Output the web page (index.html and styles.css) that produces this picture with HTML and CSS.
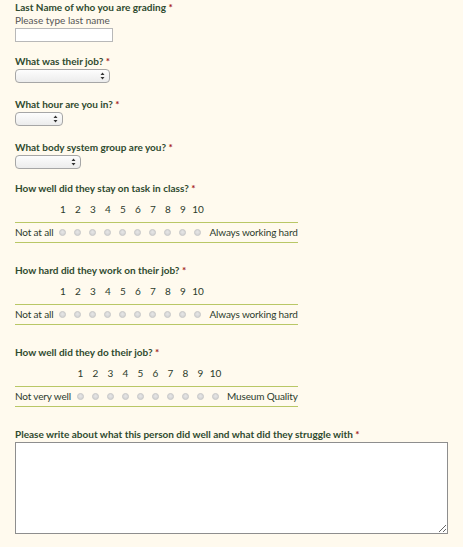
FILE: index.html
```html
<!DOCTYPE html>
<html>
<head>
<meta charset="utf-8">
<link rel="stylesheet" href="styles.css">
</head>
<body>
<form class="form">
  <div class="field f-text">
    <div class="label">Last Name of who you are grading <span class="req">*</span></div>
    <div class="hint">Please type last name</div>
    <input class="text-input" type="text">
  </div>

  <div class="field f-select">
    <div class="label">What was their job? <span class="req">*</span></div>
    <div class="select w95"><svg class="arrows" width="5" height="8" viewBox="0 0 5 8"><path d="M2.5 0.5 L4.5 3 L0.5 3 Z M2.5 7.5 L4.5 5 L0.5 5 Z" fill="#333"/></svg></div>
  </div>

  <div class="field f-select">
    <div class="label">What hour are you in? <span class="req">*</span></div>
    <div class="select w48"><svg class="arrows" width="5" height="8" viewBox="0 0 5 8"><path d="M2.5 0.5 L4.5 3 L0.5 3 Z M2.5 7.5 L4.5 5 L0.5 5 Z" fill="#333"/></svg></div>
  </div>

  <div class="field f-select last">
    <div class="label">What body system group are you? <span class="req">*</span></div>
    <div class="select w66"><svg class="arrows" width="5" height="8" viewBox="0 0 5 8"><path d="M2.5 0.5 L4.5 3 L0.5 3 Z M2.5 7.5 L4.5 5 L0.5 5 Z" fill="#333"/></svg></div>
  </div>

  <div class="field f-matrix">
    <div class="label">How well did they stay on task in class? <span class="req">*</span></div>
    <table class="scale">
      <tr class="nums"><td></td><td>1</td><td>2</td><td>3</td><td>4</td><td>5</td><td>6</td><td>7</td><td>8</td><td>9</td><td>10</td><td></td></tr>
      <tr class="opts"><td class="lo">Not at all</td><td><span class="radio"></span></td><td><span class="radio"></span></td><td><span class="radio"></span></td><td><span class="radio"></span></td><td><span class="radio"></span></td><td><span class="radio"></span></td><td><span class="radio"></span></td><td><span class="radio"></span></td><td><span class="radio"></span></td><td><span class="radio"></span></td><td class="hi">Always working hard</td></tr>
    </table>
  </div>

  <div class="field f-matrix">
    <div class="label">How hard did they work on their job? <span class="req">*</span></div>
    <table class="scale">
      <tr class="nums"><td></td><td>1</td><td>2</td><td>3</td><td>4</td><td>5</td><td>6</td><td>7</td><td>8</td><td>9</td><td>10</td><td></td></tr>
      <tr class="opts"><td class="lo">Not at all</td><td><span class="radio"></span></td><td><span class="radio"></span></td><td><span class="radio"></span></td><td><span class="radio"></span></td><td><span class="radio"></span></td><td><span class="radio"></span></td><td><span class="radio"></span></td><td><span class="radio"></span></td><td><span class="radio"></span></td><td><span class="radio"></span></td><td class="hi">Always working hard</td></tr>
    </table>
  </div>

  <div class="field f-matrix">
    <div class="label">How well did they do their job? <span class="req">*</span></div>
    <table class="scale">
      <tr class="nums"><td></td><td>1</td><td>2</td><td>3</td><td>4</td><td>5</td><td>6</td><td>7</td><td>8</td><td>9</td><td>10</td><td></td></tr>
      <tr class="opts"><td class="lo">Not very well</td><td><span class="radio"></span></td><td><span class="radio"></span></td><td><span class="radio"></span></td><td><span class="radio"></span></td><td><span class="radio"></span></td><td><span class="radio"></span></td><td><span class="radio"></span></td><td><span class="radio"></span></td><td><span class="radio"></span></td><td><span class="radio"></span></td><td class="hi">Museum Quality</td></tr>
    </table>
  </div>

  <div class="field f-area">
    <div class="label">Please write about what this person did well and what did they struggle with <span class="req">*</span></div>
    <textarea class="area"></textarea>
  </div>
</form>
</body>
</html>
```

FILE: styles.css
```css
html, body {
  margin: 0;
  padding: 0;
  background: #fffaee;
}
body {
  font-family: "Lato", "Liberation Sans", sans-serif;
  font-size: 10px;
  color: #2c3b2c;
}
.form {
  padding: 1px 0 0 15px;
}
.field {
  margin: 0;
}
.label {
  font-weight: bold;
  color: #2f4a2f;
  line-height: 13px;
  height: 13px;
}
.req {
  color: #a32020;
}
.hint {
  color: #555;
  line-height: 12px;
  height: 12px;
}
.text-input {
  display: block;
  box-sizing: border-box;
  width: 98px;
  height: 14px;
  margin: 2px 0 0 0;
  padding: 0;
  border: 1px solid #b8b8b8;
  background: #fff;
}
.f-text { margin-bottom: 13px; }
.f-select { margin-bottom: 15px; }
.f-select.last { margin-bottom: 13px; }
.select {
  box-sizing: border-box;
  height: 14px;
  margin-top: 1px;
  border: 1px solid #a6a6a6;
  border-radius: 4px;
  background: linear-gradient(#fdfdfd, #ececec);
  display: flex;
  align-items: center;
  justify-content: flex-end;
  padding-right: 4px;
}
.w95 { width: 95px; }
.w48 { width: 48px; }
.w66 { width: 66px; }
.arrows { display: block; }

.f-matrix { margin-bottom: 21px; }
.scale {
  border-collapse: collapse;
  margin-top: 8px;
}
.scale td {
  padding: 0;
  text-align: center;
  white-space: nowrap;
}
.nums td {
  height: 13px;
  line-height: 13px;
  padding-bottom: 6px;
  color: #2c3b2c;
}
.nums td:not(:first-child):not(:last-child) { width: 15px; }
.opts td {
  border-top: 1px solid #b9c766;
  border-bottom: 1px solid #b9c766;
  height: 19px;
  line-height: 13px;
  vertical-align: middle;
  letter-spacing: -0.15px;
}
.opts .lo { text-align: left; padding-right: 2px; }
.opts .hi { text-align: left; padding-left: 4px; }
.radio {
  display: inline-block;
  width: 7px;
  height: 7px;
  box-sizing: border-box;
  border-radius: 50%;
  border: 1px solid #c9c9c9;
  background: radial-gradient(circle at 50% 40%, #e6e6e6, #cfcfcf);
  vertical-align: middle;
  margin-top: -1px;
}
.f-area .label { height: 14px; }
.area {
  display: block;
  box-sizing: border-box;
  width: 433px;
  height: 92px;
  margin: 0;
  border: 1px solid #8e8e8e;
  background: #fff;
  font-family: inherit;
}
```
